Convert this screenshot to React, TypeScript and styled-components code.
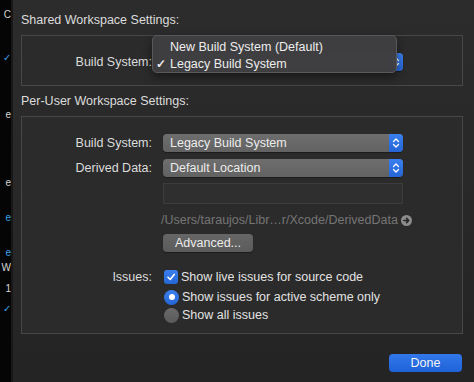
import * as React from "react"
import styled, { createGlobalStyle } from "styled-components"

const GlobalStyle = createGlobalStyle`
  html, body {
    margin: 0;
    padding: 0;
    background: #262626;
  }
  body {
    font-family: "Liberation Sans", Arial, sans-serif;
    font-size: 12px;
    -webkit-font-smoothing: antialiased;
  }
`

const Screen = styled.div`
  display: flex;
  width: 474px;
  height: 382px;
  overflow: hidden;
`

const BackWindow = styled.div`
  width: 11px;
  flex-shrink: 0;
  background: #050505;
  border-right: 2px solid #181818;
  overflow: hidden;
  display: flex;
  flex-direction: column;
  align-items: flex-end;
`

const Glyph = styled.span<{ $top: number; $blue?: boolean }>`
  display: block;
  margin-top: ${(p) => p.$top}px;
  height: 14px;
  line-height: 14px;
  font-size: 10px;
  color: ${(p) => (p.$blue ? "#3aa0e8" : "#d6d6d6")};
`

const Sheet = styled.div`
  flex: 1;
  min-width: 0;
  padding: 12px 11px 0 8px;
  background: linear-gradient(#2c2c2c, #242424);
  color: #dcdcdc;
  display: flex;
  flex-direction: column;
`

const Heading = styled.div`
  height: 16px;
  line-height: 16px;
  font-size: 12.5px;
  margin-bottom: 7px;
`

const Group = styled.div<{ $pad: string }>`
  border: 1px solid #474747;
  background: #2b2b2b;
  padding: ${(p) => p.$pad};
  margin-bottom: 7px;
  display: flex;
  flex-direction: column;
`

const Row = styled.div<{ $gap?: number; $h?: number }>`
  display: grid;
  grid-template-columns: 130px 240px;
  column-gap: 11px;
  align-items: center;
  margin-top: ${(p) => p.$gap ?? 0}px;
  height: ${(p) => p.$h ?? 18}px;
`

const Label = styled.div`
  text-align: right;
  white-space: nowrap;
  font-size: 12.5px;
`

const Control = styled.div`
  position: relative;
  display: flex;
  align-items: center;
  height: 100%;
`

const PopupButton = styled.div`
  position: relative;
  width: 240px;
  height: 18px;
  border-radius: 4px;
  background: linear-gradient(#6e6e6e, #626262);
  box-shadow: 0 1px 1px rgba(0, 0, 0, 0.35);
  color: #ececec;
  font-size: 12.5px;
  line-height: 18px;
  padding-left: 7px;
  box-sizing: border-box;
`

const Stepper = styled.div`
  position: absolute;
  right: 0;
  top: 0;
  width: 14px;
  height: 18px;
  border-radius: 0 4px 4px 0;
  background: linear-gradient(#3a80ee, #2564d4);
  display: flex;
  align-items: center;
  justify-content: center;
`

const Menu = styled.div`
  position: absolute;
  left: -11px;
  top: -18px;
  width: 245px;
  height: 38px;
  box-sizing: border-box;
  padding-top: 2px;
  border-radius: 5px;
  background: rgba(62, 62, 64, 0.98);
  border: 1px solid #58585a;
  box-shadow: 0 4px 10px rgba(0, 0, 0, 0.45);
  z-index: 2;
`

const MenuItem = styled.div`
  display: flex;
  align-items: center;
  height: 17px;
  font-size: 12.5px;
  color: #ededed;
`

const CheckMark = styled.span`
  width: 17px;
  padding-left: 3px;
  box-sizing: border-box;
  font-size: 12px;
  font-weight: bold;
`

const Field = styled.div`
  width: 240px;
  height: 21px;
  box-sizing: border-box;
  background: #2f2f2f;
  border: 1px solid #3c3c3c;
`

const Path = styled.div`
  display: flex;
  align-items: center;
  gap: 3px;
  margin-left: -2px;
  color: #757575;
  font-size: 12.5px;
  white-space: nowrap;
`

const Push = styled.div`
  width: 90px;
  height: 18px;
  border-radius: 4px;
  background: linear-gradient(#666666, #5b5b5b);
  box-shadow: 0 1px 1px rgba(0, 0, 0, 0.35);
  color: #ececec;
  font-size: 12.5px;
  text-align: center;
  line-height: 18px;
`

const Option = styled.div`
  display: flex;
  align-items: center;
  gap: 3px;
  margin-left: 1px;
  white-space: nowrap;
  font-size: 12.5px;
  color: #e2e2e2;
`

const CheckBox = styled.div`
  width: 14px;
  height: 14px;
  border-radius: 3px;
  background: linear-gradient(#3a80ee, #2566d6);
  display: flex;
  align-items: center;
  justify-content: center;
`

const Radio = styled.div<{ $on?: boolean }>`
  width: 15px;
  height: 15px;
  border-radius: 50%;
  background: ${(p) =>
    p.$on ? "linear-gradient(#3a80ee, #2566d6)" : "linear-gradient(#6a6a6a, #5a5a5a)"};
  display: flex;
  align-items: center;
  justify-content: center;
  &::after {
    content: "";
    display: ${(p) => (p.$on ? "block" : "none")};
    width: 6px;
    height: 6px;
    border-radius: 50%;
    background: #ffffff;
  }
`

const Footer = styled.div`
  display: flex;
  justify-content: flex-end;
  margin-top: 13px;
  padding-right: 1px;
`

const DoneButton = styled.div`
  width: 73px;
  height: 18px;
  border-radius: 4px;
  background: linear-gradient(#3278ea, #1f62d8);
  color: #f4f4f4;
  font-size: 12.5px;
  text-align: center;
  line-height: 18px;
`

const Chevrons = () => (
  <svg width="8" height="12" viewBox="0 0 8 12">
    <path d="M1.5 4.5 L4 2 L6.5 4.5 M1.5 7.5 L4 10 L6.5 7.5" fill="none" stroke="#fff" strokeWidth="1.3" strokeLinecap="round" strokeLinejoin="round" />
  </svg>
)

const Tick = ({ size = 10 }: { size?: number }) => (
  <svg width={size} height={size} viewBox="0 0 10 10">
    <path d="M2 5.2 L4.2 7.4 L8.2 2.4" fill="none" stroke="#fff" strokeWidth="1.6" strokeLinecap="round" strokeLinejoin="round" />
  </svg>
)

const RevealArrow = () => (
  <svg width="11" height="11" viewBox="0 0 11 11">
    <circle cx="5.5" cy="5.5" r="5.5" fill="#8c8c8c" />
    <path d="M2.8 5.5 H7.6 M5.6 3.4 L7.7 5.5 L5.6 7.6" fill="none" stroke="#262626" strokeWidth="1.5" strokeLinecap="round" strokeLinejoin="round" />
  </svg>
)

// letters of the window behind the sheet
const glyphs: { top: number; ch: string; blue?: boolean }[] = [
  { top: 8, ch: "C" },
  { top: 29, ch: "✓", blue: true },
  { top: 43, ch: "e" },
  { top: 54, ch: "e" },
  { top: 21, ch: "e", blue: true },
  { top: 21, ch: "e", blue: true },
  { top: 1, ch: "W" },
  { top: 7, ch: "1" },
  { top: 6, ch: "✓", blue: true },
]

export default function App() {
  return (
    <Screen>
      <GlobalStyle />
      <BackWindow>
        {glyphs.map((g, i) => (
          <Glyph key={i} $top={g.top} $blue={g.blue}>
            {g.ch}
          </Glyph>
        ))}
      </BackWindow>
      <Sheet>
        <Heading>Shared Workspace Settings:</Heading>
        <Group $pad="17px 0 14px">
          <Row>
            <Label>Build System:</Label>
            <Control>
              {/* the open menu covers the button's title */}
              <PopupButton>
                <Stepper>
                  <Chevrons />
                </Stepper>
              </PopupButton>
              <Menu>
                <MenuItem>
                  <CheckMark />
                  New Build System (Default)
                </MenuItem>
                <MenuItem>
                  <CheckMark>✓</CheckMark>
                  Legacy Build System
                </MenuItem>
              </Menu>
            </Control>
          </Row>
        </Group>

        <Heading>Per-User Workspace Settings:</Heading>
        <Group $pad="17px 0 9px">
          <Row>
            <Label>Build System:</Label>
            <Control>
              <PopupButton>
                Legacy Build System
                <Stepper>
                  <Chevrons />
                </Stepper>
              </PopupButton>
            </Control>
          </Row>
          <Row $gap={7}>
            <Label>Derived Data:</Label>
            <Control>
              <PopupButton>
                Default Location
                <Stepper>
                  <Chevrons />
                </Stepper>
              </PopupButton>
            </Control>
          </Row>
          <Row $gap={6} $h={21}>
            <span />
            <Control>
              <Field />
            </Control>
          </Row>
          <Row $gap={8} $h={16}>
            <span />
            <Control>
              <Path>
                /Users/taraujos/Libr…r/Xcode/DerivedData
                <RevealArrow />
              </Path>
            </Control>
          </Row>
          <Row $gap={6}>
            <span />
            <Control>
              <Push>Advanced...</Push>
            </Control>
          </Row>
          <Row $gap={16}>
            <Label>Issues:</Label>
            <Control>
              <Option>
                <CheckBox>
                  <Tick />
                </CheckBox>
                Show live issues for source code
              </Option>
            </Control>
          </Row>
          <Row $gap={2}>
            <span />
            <Control>
              <Option>
                <Radio $on />
                Show issues for active scheme only
              </Option>
            </Control>
          </Row>
          <Row>
            <span />
            <Control>
              <Option>
                <Radio />
                Show all issues
              </Option>
            </Control>
          </Row>
        </Group>

        <Footer>
          <DoneButton>Done</DoneButton>
        </Footer>
      </Sheet>
    </Screen>
  )
}
